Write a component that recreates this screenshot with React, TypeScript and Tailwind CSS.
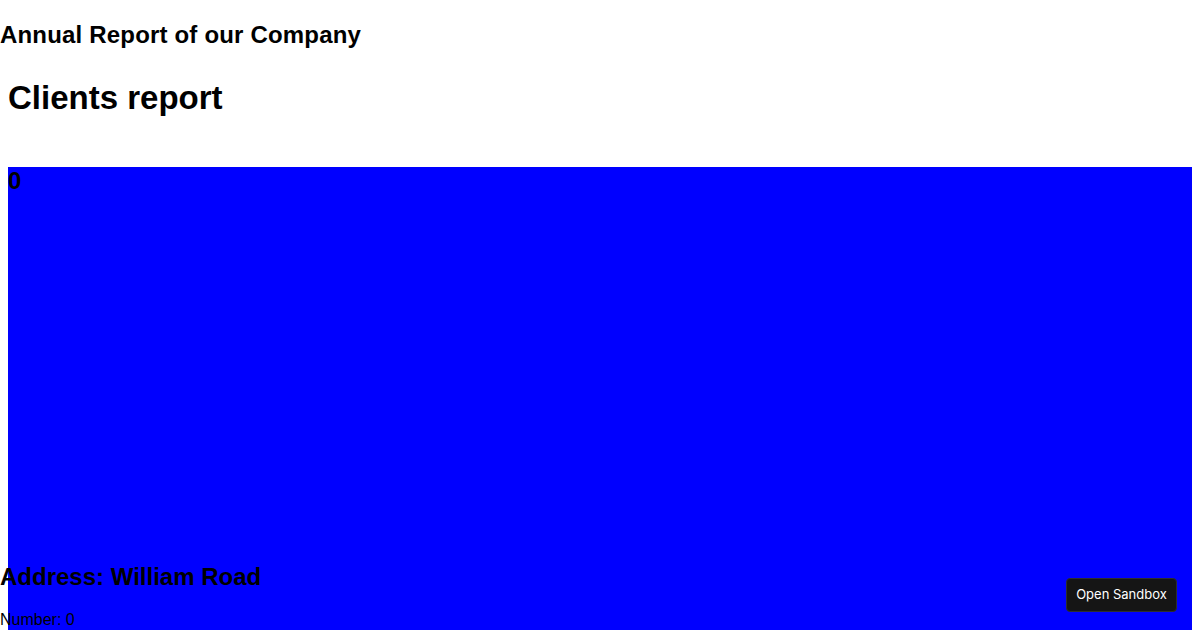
export default function App() {
  return (
    <div className="relative h-screen overflow-hidden bg-white font-['Liberation_Sans',Arial,sans-serif] text-black">
      <h2 className="mt-[21px] text-[24px] font-bold leading-[normal] tracking-[0.18px]">Annual Report of our Company</h2>

      <div className="px-2">
        <h1 className="mt-[30px] text-[33px] font-bold leading-[normal]">Clients report</h1>

        <div className="mt-[50px] h-[470px] bg-[#0000ff]">
          <h3 className="text-[24px] font-bold leading-[normal]">0</h3>

          <h2 className="-ml-2 mt-[368px] text-[24px] font-bold leading-[normal]">Address: William Road</h2>
          <p className="-ml-2 mt-[20px] text-[16px] leading-[normal]">Number: 0</p>
        </div>
      </div>

      <button className="absolute bottom-[18px] right-[23px] h-[34px] w-[111px] rounded-[4px] border border-[#2e2e2e] bg-[#151515] font-['Inter',sans-serif] text-[13px] text-white">
        Open Sandbox
      </button>
    </div>
  );
}
